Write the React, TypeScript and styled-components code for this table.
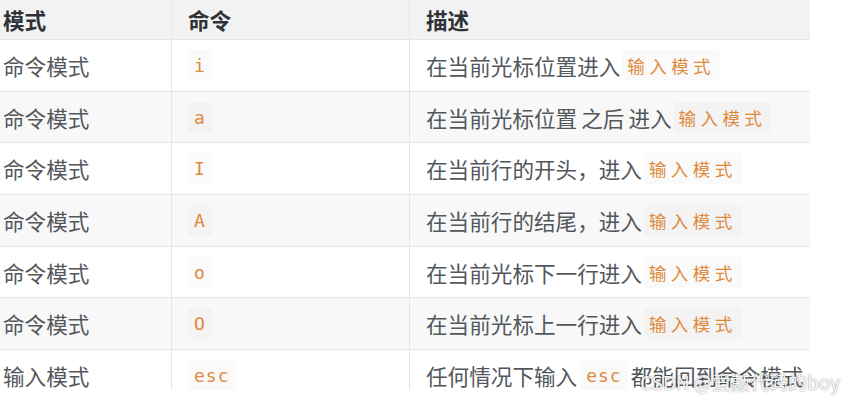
import React from "react";
import styled, { createGlobalStyle } from "styled-components";

const Global = createGlobalStyle`
  html, body { margin: 0; padding: 0; background: #ffffff; overflow: hidden; }
  body { font-family: "Noto Sans CJK SC", "Noto Sans", sans-serif; }
`;

const Page = styled.div`
  position: relative;
  width: 858px;
  height: 404px;
  background: #ffffff;
`;

const Clip = styled.div`
  height: 390px;
  overflow: hidden;
`;

const Table = styled.div`
  margin-top: -8px;
  margin-left: -13px;
  width: 823px;
  display: flex;
  flex-direction: column;
`;

const Row = styled.div<{ $head?: boolean; $shade?: boolean }>`
  display: grid;
  grid-template-columns: 184px 238px 401px;
  box-sizing: border-box;
  height: ${(p) => (p.$head ? "47px" : "51.7px")};
  background: ${(p) => (p.$head ? "#f2f2f2" : p.$shade ? "#f8f8f8" : "#ffffff")};
  border-top: ${(p) => (p.$head ? "none" : "1px solid #e6e6e6")};
  flex: none;
`;

const Cell = styled.div<{ $head?: boolean; $first?: boolean }>`
  display: flex;
  align-items: center;
  padding-left: 16px;
  padding-top: ${(p) => (p.$head ? "8px" : "0")};
  border-left: ${(p) => (p.$first ? "none" : "1px solid #e6e6e6")};
  font-size: 21.6px;
  font-weight: ${(p) => (p.$head ? 700 : 400)};
  color: ${(p) => (p.$head ? "#2f3337" : "#53575c")};
  white-space: nowrap;
  overflow: hidden;
`;

const Gap = styled.span`
  display: inline-block;
  width: 4px;
`;

const Code = styled.span<{ $cjk?: boolean }>`
  display: inline-flex;
  align-items: center;
  height: 31px;
  padding: 0 ${(p) => (p.$cjk ? "5px" : "6px")};
  margin: 0 ${(p) => (p.$cjk ? "2px" : "3px")};
  background: rgba(0, 0, 0, 0.018);
  border-radius: 3px;
  color: #e0893c;
  font-family: ${(p) =>
    p.$cjk
      ? '"Noto Sans CJK SC", sans-serif'
      : '"DejaVu Sans Mono", "Liberation Mono", monospace'};
  font-size: ${(p) => (p.$cjk ? "17.5px" : "18px")};
  letter-spacing: ${(p) => (p.$cjk ? "4.4px" : "1px")};
`;

const FirstCode = styled(Code)`
  margin-left: 0;
`;

const Watermark = styled.div`
  position: absolute;
  left: 640px;
  top: 370px;
  font-family: "Noto Sans CJK SC", "Noto Sans", sans-serif;
  font-size: 19px;
  line-height: 24px;
  color: rgba(255, 255, 255, 0.95);
  text-shadow: 0 0 1.5px rgba(0, 0, 0, 0.55);
  white-space: nowrap;
`;

type Item = { mode: string; cmd: string; desc: React.ReactNode };

const IM = () => <Code $cjk>输入模式</Code>;

const rows: Item[] = [
  { mode: "命令模式", cmd: "i", desc: <>在当前光标位置进入<IM /></> },
  {
    mode: "命令模式",
    cmd: "a",
    desc: (
      <>
        在当前光标位置<Gap /> 之后<Gap /> 进入<IM />
      </>
    ),
  },
  { mode: "命令模式", cmd: "I", desc: <>在当前行的开头，进入<IM /></> },
  { mode: "命令模式", cmd: "A", desc: <>在当前行的结尾，进入<IM /></> },
  { mode: "命令模式", cmd: "o", desc: <>在当前光标下一行进入<IM /></> },
  { mode: "命令模式", cmd: "O", desc: <>在当前光标上一行进入<IM /></> },
  {
    mode: "输入模式",
    cmd: "esc",
    desc: (
      <>
        任何情况下输入<Code>esc</Code>都能回到命令模式
      </>
    ),
  },
];

export default function App() {
  return (
    <Page>
      <Global />
      <Clip>
        <Table>
          <Row $head>
            <Cell $head $first>模式</Cell>
            <Cell $head>命令</Cell>
            <Cell $head>描述</Cell>
          </Row>
          {rows.map((r, i) => (
            <Row key={i} $shade={i % 2 === 1}>
              <Cell $first>{r.mode}</Cell>
              <Cell>
                <FirstCode>{r.cmd}</FirstCode>
              </Cell>
              <Cell>{r.desc}</Cell>
            </Row>
          ))}
        </Table>
      </Clip>
      <Watermark>CSDN @爱敲代码的boy</Watermark>
    </Page>
  );
}
